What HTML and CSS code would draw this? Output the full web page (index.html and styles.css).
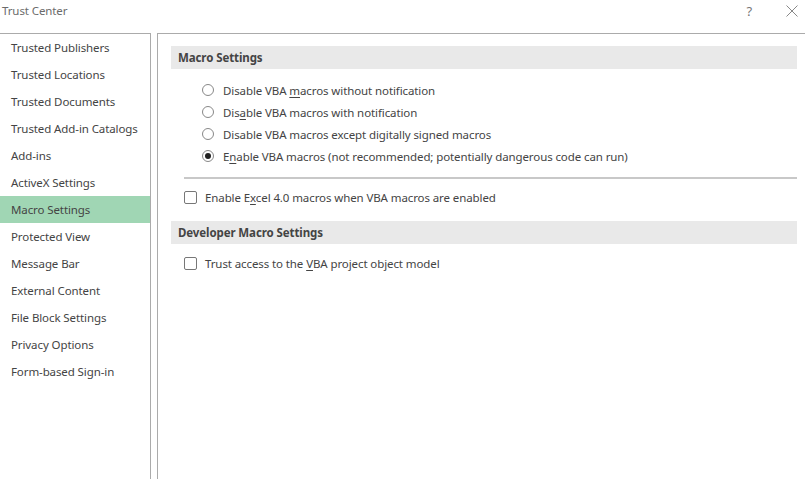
FILE: index.html
```html
<!DOCTYPE html>
<html lang="en">
<head>
    <meta charset="UTF-8">
    <title>Trust Center</title>
    <link rel="stylesheet" href="styles.css">
</head>
<body>
    <div class="titlebar">
        <span class="title">Trust Center</span>
        <span class="help">?</span>
        <svg class="close" width="12" height="12" viewBox="0 0 12 12">
            <path d="M0.5 0.5 L11.5 11.5 M11.5 0.5 L0.5 11.5" stroke="#888" stroke-width="1" fill="none"/>
        </svg>
    </div>
    <div class="main">
        <ul class="nav">
            <li>Trusted Publishers</li>
            <li>Trusted Locations</li>
            <li>Trusted Documents</li>
            <li>Trusted Add-in Catalogs</li>
            <li>Add-ins</li>
            <li>ActiveX Settings</li>
            <li class="selected">Macro Settings</li>
            <li>Protected View</li>
            <li>Message Bar</li>
            <li>External Content</li>
            <li>File Block Settings</li>
            <li>Privacy Options</li>
            <li>Form-based Sign-in</li>
        </ul>
        <div class="content">
            <div class="section-head">Macro Settings</div>
            <div class="radios">
                <div class="option"><span class="radio"></span><span>Disable VBA <u>m</u>acros without notification</span></div>
                <div class="option"><span class="radio"></span><span>Dis<u>a</u>ble VBA macros with notification</span></div>
                <div class="option"><span class="radio"></span><span>Disable VBA macros except digitally signed macros</span></div>
                <div class="option"><span class="radio checked"></span><span>E<u>n</u>able VBA macros (not recommended; potentially dangerous code can run)</span></div>
            </div>
            <div class="divider"></div>
            <div class="check-row first"><span class="checkbox"></span><span>Enable E<u>x</u>cel 4.0 macros when VBA macros are enabled</span></div>
            <div class="section-head second">Developer Macro Settings</div>
            <div class="check-row"><span class="checkbox"></span><span>Trust access to the <u>V</u>BA project object model</span></div>
        </div>
    </div>
</body>
</html>
```

FILE: styles.css
```css
body {
    margin: 0;
    font-family: 'Noto Sans', 'Open Sans', sans-serif;
    font-size: 11.5px;
    letter-spacing: -0.1px;
    color: #444;
    background: #fff;
    height: 479px;
    overflow: hidden;
}
.titlebar {
    height: 21px;
    display: flex;
    align-items: center;
    padding: 0 7px 0 2px;
}
.title {
    flex: 1;
    color: #6b6b6b;
}
.help {
    color: #777;
    font-size: 13px;
    margin-right: 34px;
}
.main {
    display: flex;
    height: 446px;
    margin-top: 12px;
}
.nav {
    list-style: none;
    margin: 0;
    padding: 0;
    width: 150px;
    border-top: 1px solid #ababab;
    border-right: 1px solid #ababab;
}
.nav li {
    height: 27px;
    line-height: 27px;
    padding-left: 11px;
}
.nav li.selected {
    background: #a0d6b4;
}
.content {
    flex: 1;
    margin-left: 6px;
    border-top: 1px solid #ababab;
    border-left: 1px solid #ababab;
    padding: 12px 8px 0 13px;
}
.section-head {
    height: 23px;
    line-height: 23px;
    background: #e9e9e9;
    padding-left: 7px;
    font-weight: bold;
}
.section-head.second {
    margin-top: 13px;
}
.radios {
    margin-top: 10px;
    padding-left: 31px;
}
.option {
    height: 22px;
    display: flex;
    align-items: center;
}
.radio {
    width: 10px;
    height: 10px;
    border: 1px solid #888;
    border-radius: 50%;
    margin-right: 9px;
    display: flex;
    align-items: center;
    justify-content: center;
}
.radio.checked::after {
    content: "";
    width: 6px;
    height: 6px;
    border-radius: 50%;
    background: #222;
}
.divider {
    height: 2px;
    background: #c8c8c8;
    margin: 10px 0 0 13px;
}
.check-row {
    height: 22px;
    display: flex;
    align-items: center;
    padding-left: 13px;
    margin-top: 8px;
}
.check-row.first {
    margin-top: 7px;
}
.checkbox {
    width: 11px;
    height: 11px;
    border: 1px solid #777;
    border-radius: 2px;
    margin-right: 8px;
}
u {
    text-underline-offset: 2px;
}
```
